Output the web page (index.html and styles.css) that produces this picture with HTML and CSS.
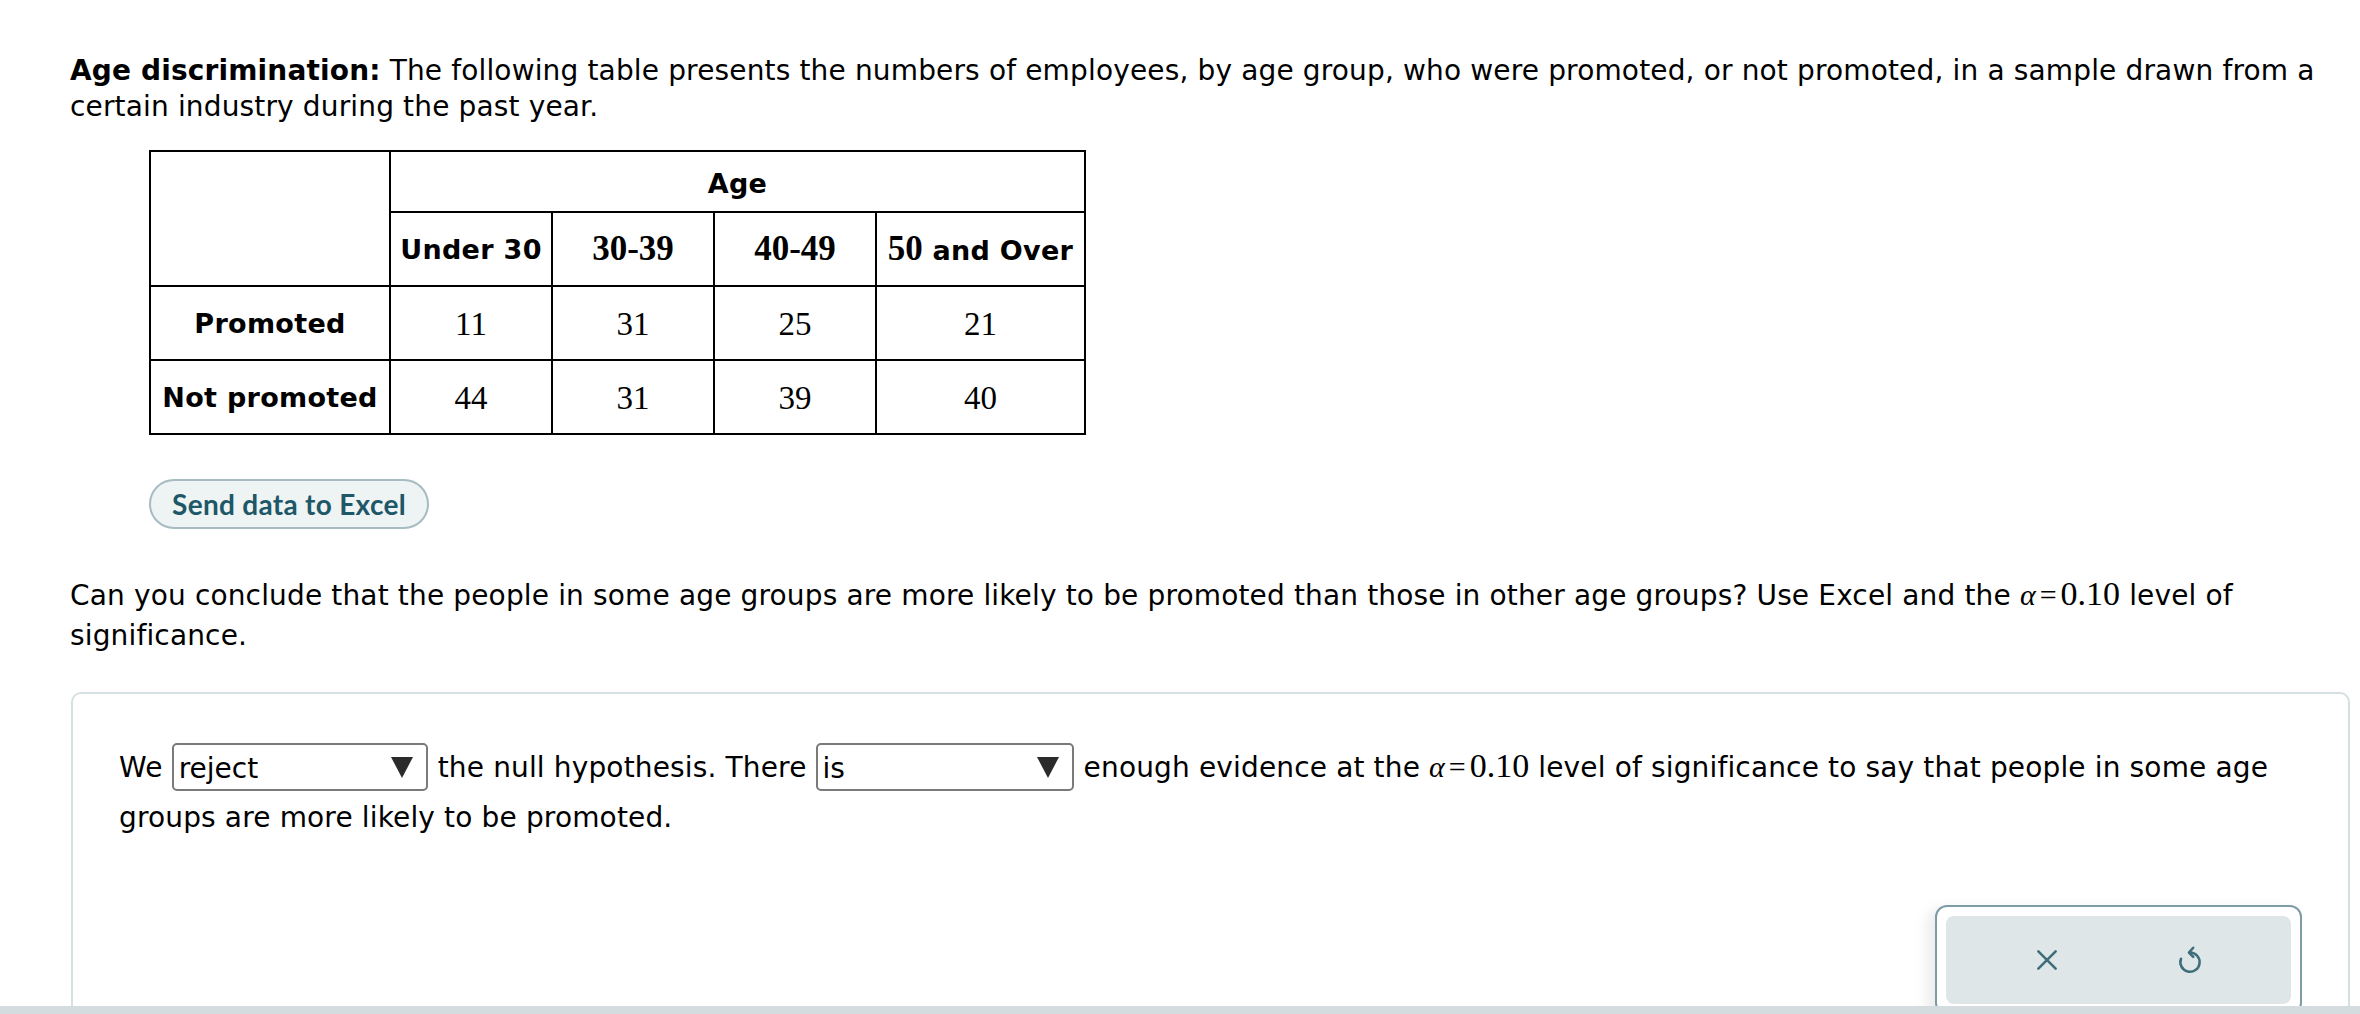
FILE: index.html
```html
<!DOCTYPE html>
<html lang="en">
<head>
<meta charset="utf-8">
<title>Age discrimination</title>
<link rel="stylesheet" href="styles.css">
</head>
<body>
<div class="page">
  <p class="intro"><b>Age discrimination:</b> The following table presents the numbers of employees, by age group, who were promoted, or not promoted, in a sample drawn from a certain industry during the past year.</p>

  <table class="data">
    <colgroup>
      <col class="c-head"><col class="c-num"><col class="c-num"><col class="c-num"><col class="c-last">
    </colgroup>
    <tr class="r-age">
      <th rowspan="2"></th>
      <th colspan="4">Age</th>
    </tr>
    <tr class="r-hdr">
      <th>Under 30</th>
      <th><span class="serif-b">30-39</span></th>
      <th><span class="serif-b">40-49</span></th>
      <th><span class="serif-b">50</span> and Over</th>
    </tr>
    <tr class="r-val">
      <th>Promoted</th>
      <td>11</td><td>31</td><td>25</td><td>21</td>
    </tr>
    <tr class="r-val">
      <th>Not promoted</th>
      <td>44</td><td>31</td><td>39</td><td>40</td>
    </tr>
  </table>

  <button class="excel" type="button">Send data to Excel</button>

  <p class="question">Can you conclude that the people in some age groups are more likely to be promoted than those in other age groups? Use Excel and the <span class="math"><span class="alpha">α</span><span class="eq">=</span><span class="num">0.10</span></span> level of significance.</p>

  <div class="panel">
    <p class="answer">We <span class="select sel-1"><span class="sel-text">reject</span><svg class="caret" viewBox="0 0 22 22" width="22" height="22"><polygon points="0,1 22,1 11,22" fill="#2b2b2b"/></svg></span> the null hypothesis. There <span class="select sel-2"><span class="sel-text">is</span><svg class="caret" viewBox="0 0 22 22" width="22" height="22"><polygon points="0,1 22,1 11,22" fill="#2b2b2b"/></svg></span> enough evidence at the <span class="math"><span class="alpha">α</span><span class="eq">=</span><span class="num">0.10</span></span> level of significance to say that people in some age groups are more likely to be promoted.</p>

    <div class="tools">
      <div class="tools-inner">
        <button class="tool" type="button" aria-label="Clear">
          <svg viewBox="0 0 24 24" width="26" height="26"><path d="M4 4 L20 20 M20 4 L4 20" stroke="#3f6d79" stroke-width="2.4" stroke-linecap="round" fill="none"/></svg>
        </button>
        <button class="tool" type="button" aria-label="Undo">
          <svg viewBox="0 0 24 30" width="26" height="32"><path d="M12 8 A9 9 0 1 1 3.6 13.8" stroke="#3f6d79" stroke-width="2.4" stroke-linecap="round" fill="none"/><path d="M15 3.5 L11 8 L15 12" stroke="#3f6d79" stroke-width="2.4" stroke-linecap="round" stroke-linejoin="round" fill="none"/></svg>
        </button>
      </div>
    </div>
  </div>
</div>
<div class="bottombar"></div>
</body>
</html>
```

FILE: styles.css
```css
html, body {
  margin: 0;
  padding: 0;
  background: #ffffff;
  overflow: hidden;
}

body {
  font-family: "DejaVu Sans", Verdana, sans-serif;
  font-size: 28px;
  letter-spacing: 0.15px;
  line-height: 36px;
  color: #000000;
}

.page {
  padding: 53px 0 0 70px;
}

.intro {
  margin: 0;
  width: 2262px;
}

.intro b {
  font-weight: bold;
}

/* table */
.data {
  margin: 25px 0 0 79px;
  border-collapse: collapse;
  table-layout: fixed;
  width: 935px;
  border: 2px solid #000;
}

.c-head { width: 240px; }
.c-num { width: 162px; }
.c-last { width: 209px; }

.data th,
.data td {
  border: 2px solid #000;
  text-align: center;
  padding: 2px 0 0 0;
}

.data th {
  font-weight: bold;
  font-size: 27px;
  letter-spacing: 0.3px;
}

.r-age th { height: 55px; padding-top: 4px; }
.r-hdr th { height: 70px; }
.r-val th,
.r-val td { height: 70px; }

.data td {
  font-family: "Liberation Serif", "Times New Roman", serif;
  font-size: 33px;
  letter-spacing: 0;
}

.serif-b {
  font-family: "Liberation Serif", "Times New Roman", serif;
  font-weight: bold;
  font-size: 35px;
  letter-spacing: 0;
}

/* excel button */
.excel {
  display: block;
  margin: 44px 0 0 79px;
  width: 280px;
  height: 50px;
  border: 2px solid #a6bbc2;
  border-radius: 25px;
  background: #eef3f4;
  color: #1e5868;
  font-family: Lato, "Open Sans", sans-serif;
  font-weight: bold;
  font-size: 28px;
  letter-spacing: 0.3px;
  padding: 0;
}

/* question */
.question {
  margin: 45px 0 0 0;
  width: 2262px;
  line-height: 40px;
}

.math {
  font-family: "Liberation Serif", "Times New Roman", serif;
  white-space: nowrap;
  letter-spacing: 0;
}

.math .alpha {
  font-style: italic;
  font-size: 30px;
}

.math .eq {
  font-size: 30px;
  margin: 0 4px;
}

.math .num {
  font-size: 34px;
}

/* answer panel */
.panel {
  margin: 36px 0 0 1px;
  width: 2279px;
  height: 420px;
  border: 2px solid #d6dfe2;
  border-radius: 10px;
  padding: 47px 46px 0 46px;
  box-sizing: border-box;
  display: flex;
  flex-direction: column;
}

.answer {
  margin: 0;
  line-height: 50px;
}

.select {
  display: inline-flex;
  align-items: center;
  justify-content: space-between;
  box-sizing: border-box;
  width: 256px;
  height: 48px;
  border: 2px solid #7a7a7a;
  border-radius: 5px;
  padding: 0 13px 0 5px;
  vertical-align: middle;
  margin: -4px 1px 0 0;
  line-height: 44px;
  letter-spacing: 0;
}

.sel-2 {
  width: 258px;
}

.sel-text {
  padding-top: 4px;
}

.caret {
  display: block;
}

/* tools */
.tools {
  align-self: flex-end;
  margin-top: 62px;
  width: 367px;
  border: 2px solid #7d9ca5;
  border-radius: 12px;
  background: #ffffff;
  padding: 9px;
  box-sizing: border-box;
  box-shadow: -8px 4px 14px rgba(0, 0, 0, 0.08);
}

.tools-inner {
  height: 88px;
  background: #dfe6e8;
  border-radius: 8px;
  display: flex;
  justify-content: space-around;
  align-items: center;
  padding: 0 30px;
}

.tool {
  background: transparent;
  border: 0;
  padding: 0;
  width: 48px;
  height: 48px;
  display: flex;
  align-items: center;
  justify-content: center;
}

.bottombar {
  position: fixed;
  left: 0;
  right: 0;
  bottom: 0;
  height: 8px;
  background: #d4dcdf;
}
```
